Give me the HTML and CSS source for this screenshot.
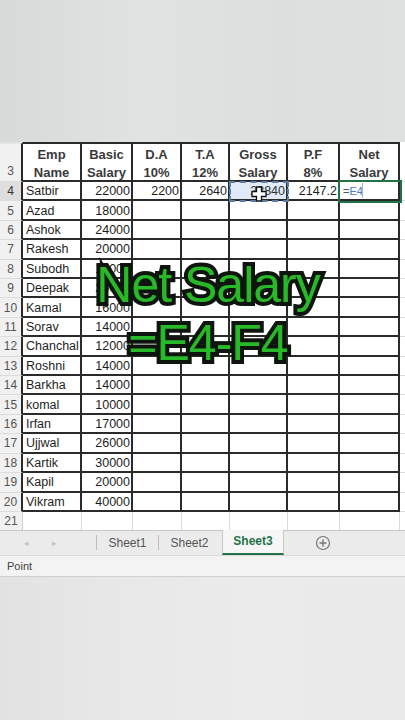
FILE: index.html
```html
<!DOCTYPE html>
<html>
<head>
<meta charset="utf-8">
<link rel="stylesheet" href="styles.css">
</head>
<body>
<div class="top"></div>
<div class="sheet">
  <div class="rn r3">3</div>
  <div class="h">Emp<br>Name</div>
  <div class="h">Basic<br>Salary</div>
  <div class="h">D.A<br>10%</div>
  <div class="h">T.A<br>12%</div>
  <div class="h">Gross<br>Salary</div>
  <div class="h">P.F<br>8%</div>
  <div class="h">Net<br>Salary</div>
  <div class="x"></div>

  <div class="rn act">4</div>
  <div class="c">Satbir</div>
  <div class="c n">22000</div>
  <div class="c n">2200</div>
  <div class="c n">2640</div>
  <div class="c n copy">23840</div>
  <div class="c n">2147.2</div>
  <div class="c edit"><span class="eq">=</span><span class="ref">E4</span></div>
  <div class="x"></div>

  <div class="rn">5</div><div class="c">Azad</div><div class="c n">18000</div><div class="c"></div><div class="c"></div><div class="c"></div><div class="c"></div><div class="c"></div><div class="x"></div>
  <div class="rn">6</div><div class="c">Ashok</div><div class="c n">24000</div><div class="c"></div><div class="c"></div><div class="c"></div><div class="c"></div><div class="c"></div><div class="x"></div>
  <div class="rn">7</div><div class="c">Rakesh</div><div class="c n">20000</div><div class="c"></div><div class="c"></div><div class="c"></div><div class="c"></div><div class="c"></div><div class="x"></div>
  <div class="rn">8</div><div class="c">Subodh</div><div class="c n">15000</div><div class="c"></div><div class="c"></div><div class="c"></div><div class="c"></div><div class="c"></div><div class="x"></div>
  <div class="rn">9</div><div class="c">Deepak</div><div class="c n">25000</div><div class="c"></div><div class="c"></div><div class="c"></div><div class="c"></div><div class="c"></div><div class="x"></div>
  <div class="rn">10</div><div class="c">Kamal</div><div class="c n">16000</div><div class="c"></div><div class="c"></div><div class="c"></div><div class="c"></div><div class="c"></div><div class="x"></div>
  <div class="rn">11</div><div class="c">Sorav</div><div class="c n">14000</div><div class="c"></div><div class="c"></div><div class="c"></div><div class="c"></div><div class="c"></div><div class="x"></div>
  <div class="rn">12</div><div class="c">Chanchal</div><div class="c n">12000</div><div class="c"></div><div class="c"></div><div class="c"></div><div class="c"></div><div class="c"></div><div class="x"></div>
  <div class="rn">13</div><div class="c">Roshni</div><div class="c n">14000</div><div class="c"></div><div class="c"></div><div class="c"></div><div class="c"></div><div class="c"></div><div class="x"></div>
  <div class="rn">14</div><div class="c">Barkha</div><div class="c n">14000</div><div class="c"></div><div class="c"></div><div class="c"></div><div class="c"></div><div class="c"></div><div class="x"></div>
  <div class="rn">15</div><div class="c">komal</div><div class="c n">10000</div><div class="c"></div><div class="c"></div><div class="c"></div><div class="c"></div><div class="c"></div><div class="x"></div>
  <div class="rn">16</div><div class="c">Irfan</div><div class="c n">17000</div><div class="c"></div><div class="c"></div><div class="c"></div><div class="c"></div><div class="c"></div><div class="x"></div>
  <div class="rn">17</div><div class="c">Ujjwal</div><div class="c n">26000</div><div class="c"></div><div class="c"></div><div class="c"></div><div class="c"></div><div class="c"></div><div class="x"></div>
  <div class="rn">18</div><div class="c">Kartik</div><div class="c n">30000</div><div class="c"></div><div class="c"></div><div class="c"></div><div class="c"></div><div class="c"></div><div class="x"></div>
  <div class="rn">19</div><div class="c">Kapil</div><div class="c n">20000</div><div class="c"></div><div class="c"></div><div class="c"></div><div class="c"></div><div class="c"></div><div class="x"></div>
  <div class="rn">20</div><div class="c">Vikram</div><div class="c n">40000</div><div class="c"></div><div class="c"></div><div class="c"></div><div class="c"></div><div class="c"></div><div class="x"></div>
  <div class="rn last">21</div><div class="e"></div><div class="e"></div><div class="e"></div><div class="e"></div><div class="e"></div><div class="e"></div><div class="e"></div><div class="e x2"></div>

  <svg class="cursor" width="16" height="16" viewBox="0 0 16 16"><path d="M5.5 1h5v4.5H15v5h-4.5V15h-5v-4.5H1v-5h4.5z" fill="#fff" stroke="#111" stroke-width="1.3"/></svg>

  <div class="overlay">
    <div class="big">Net Salary</div>
    <div class="big">=E4-F4</div>
  </div>
</div>
<div class="tabs">
  <span class="arr">&#9666;</span>
  <span class="arr">&#9656;</span>
  <span class="sep"></span>
  <span class="tab">Sheet1</span>
  <span class="sep"></span>
  <span class="tab">Sheet2</span>
  <span class="tab active">Sheet3</span>
  <svg class="plus" width="16" height="16" viewBox="0 0 16 16"><circle cx="8" cy="8" r="6.5" fill="none" stroke="#777" stroke-width="1.2"/><path d="M8 4.5v7M4.5 8h7" stroke="#777" stroke-width="1.4"/></svg>
</div>
<div class="status">Point</div>
<div class="bottom"></div>
</body>
</html>
```
FILE: styles.css
```css
* { box-sizing: border-box; }
html, body { margin: 0; padding: 0; }
body {
  width: 405px;
  height: 720px;
  overflow: hidden;
  font-family: "Liberation Sans", Arial, sans-serif;
  background: #e8e8e8;
}
.top {
  height: 142px;
  background: linear-gradient(90deg, #d8dad9 0%, #e1e3e2 35%, #dddfde 70%, #dfe1e0 100%);
}
.sheet {
  position: relative;
  display: grid;
  grid-template-columns: 23px 59px 51px 49px 48px 58px 52px 60px 5px;
  grid-template-rows: 40px repeat(17, 19.41px) 18px;
  background: #fff;
  font-size: 12.5px;
  color: #1e1e1e;
}
.rn {
  background: #f1f1f1;
  color: #555;
  font-size: 12px;
  display: flex;
  align-items: center;
  justify-content: center;
  border-bottom: 1px solid #dcdcdc;
  border-right: 2px solid #2a2a2a;
}
.rn.r3 { align-items: flex-end; padding-bottom: 3px; border-top: 2px solid #e4e4e4; }
.rn.act { background: #dedede; color: #333; }
.rn.last { border-right: 1px solid #d0d0d0; border-bottom: none; }
.h {
  border-top: 2px solid #2a2a2a;
  border-right: 2px solid #2a2a2a;
  border-bottom: 2px solid #2a2a2a;
  font-weight: bold;
  font-size: 13px;
  text-align: center;
  line-height: 18px;
  padding-top: 2px;
  color: #3a3a3a;
}
.c {
  border-right: 2px solid #2a2a2a;
  border-bottom: 2px solid #2a2a2a;
  display: flex;
  align-items: center;
  padding: 1px 2px 0 3px;
  white-space: nowrap;
  overflow: visible;
}
.c.n { justify-content: flex-end; padding-right: 1px; }
.x {
  border-bottom: 1px solid #dcdcdc;
  background: #fff;
}
.e {
  border-right: 1px solid #dadada;
}
.e.x2 { border-right: none; }
.copy {
  position: relative;
  background: #dfeaf6;
  outline: 2px dashed #5b7fa6;
  outline-offset: -1px;
  color: #333;
}
.edit {
  position: relative;
  font-size: 11px;
  outline: 2px solid #217346;
  outline-offset: 0px;
  z-index: 1;
}
.edit::after {
  content: "";
  position: absolute;
  left: 22px;
  top: 1px;
  bottom: 1px;
  border-left: 1px solid #9fb7cf;
}
.eq { color: #555; }
.ref { color: #4a78c2; }
.cursor {
  position: absolute;
  left: 251px;
  top: 44px;
  z-index: 2;
}
.overlay {
  position: absolute;
  left: 0;
  width: 416px;
  top: 114px;
  text-align: center;
  pointer-events: none;
  z-index: 3;
}
.big {
  font-family: "Liberation Sans", Arial, sans-serif;
  font-size: 50px;
  line-height: 58px;
  letter-spacing: -1px;
  color: #27b927;
  -webkit-text-stroke: 8px #0e150e;
  paint-order: stroke fill;
}
.tabs {
  height: 25px;
  background: #ebebeb;
  border-top: 1px solid #c8c8c8;
  display: flex;
  align-items: center;
  font-size: 12px;
  color: #555;
  position: relative;
}
.arr { color: #c2c2c2; font-size: 9px; width: 10px; }
.arr:first-child { margin-left: 24px; margin-right: 18px; }
.arr:nth-child(2) { margin-right: 34px; }
.sep { width: 1px; height: 15px; background: #bdbdbd; }
.tab { width: 61px; text-align: center; }
.tab.active {
  align-self: stretch;
  margin-top: -1px;
  width: 62px;
  background: #f6f6f6;
  color: #217346;
  font-weight: bold;
  border-left: 1px solid #c8c8c8;
  border-right: 1px solid #c8c8c8;
  border-bottom: 2px solid #217346;
  display: flex;
  align-items: center;
  justify-content: center;
  margin-left: 2px;
}
.plus { margin-left: 31px; }
.status {
  height: 22px;
  background: #f3f3f3;
  border-top: 1px solid #dadada;
  border-bottom: 1px solid #cfcfcf;
  font-size: 11px;
  color: #444;
  padding-left: 7px;
  line-height: 21px;
}
.bottom {
  height: 143px;
  background: linear-gradient(90deg, #e2e2e2 0%, #e8e8e8 30%, #ebebeb 60%, #e9eae9 100%);
}
```
